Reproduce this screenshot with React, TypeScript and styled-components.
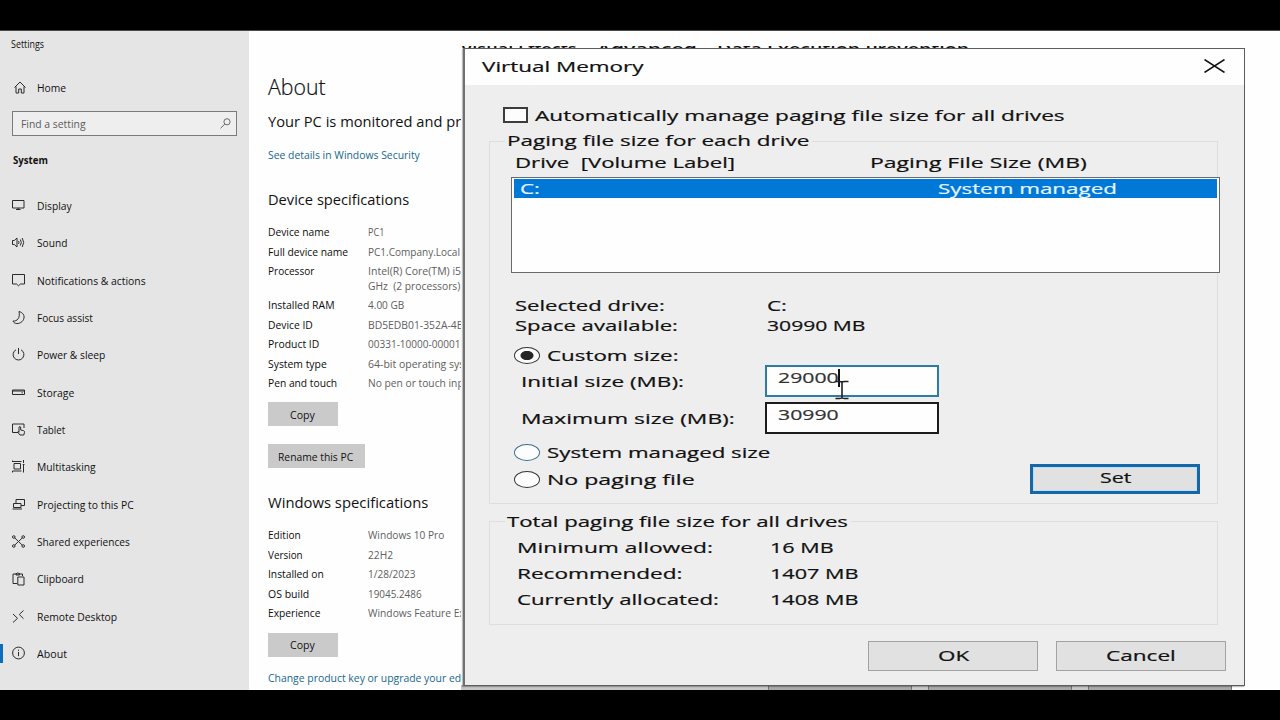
import React, { useLayoutEffect, useRef, useState } from 'react';
import styled, { createGlobalStyle } from 'styled-components';

const GlobalStyle = createGlobalStyle`
  * { box-sizing: border-box; }
  body { margin: 0; background: #000; overflow: hidden; }
`;

/* ---------- text fitted to a column width ---------- */

const FitBox = styled.span<{ $w: number }>`
  display: inline-block;
  flex: none;
  width: ${(p) => p.$w}px;
  text-align: left;
  white-space: pre;
`;

const FitInner = styled.span`
  display: inline-block;
  white-space: pre;
  transform-origin: 0 50%;
`;

function Fit({ w, children }: { w: number; children: string }) {
  const ref = useRef<HTMLSpanElement>(null);
  const [scale, setScale] = useState(1);
  useLayoutEffect(() => {
    if (ref.current) setScale(w / ref.current.offsetWidth);
  }, [w, children]);
  return (
    <FitBox $w={w}>
      <FitInner ref={ref} style={{ transform: `scaleX(${scale})` }}>
        {children}
      </FitInner>
    </FitBox>
  );
}

/* ---------- frame ---------- */

const Screen = styled.div`
  position: relative;
  width: 1280px;
  height: 720px;
  padding: 30px 0;
  background: #000;
  overflow: hidden;
  font-family: 'Open Sans', 'Noto Sans', sans-serif;
  font-size: 11px;
  color: #111;
`;

const Desktop = styled.div`
  position: relative;
  display: flex;
  height: 660px;
  background: #fefefe;
  border-top: 1px solid #4a4a4a;
  overflow: hidden;
`;

/* ---------- sidebar ---------- */

const Sidebar = styled.nav`
  display: flex;
  flex-direction: column;
  width: 249px;
  flex: none;
  background: #e5e5e5;
`;

const AppTitle = styled.div`
  height: 26px;
  line-height: 26px;
  padding-left: 11px;
  font-size: 10px;
`;

const HomeRow = styled.div`
  display: flex;
  align-items: center;
  height: 30px;
  margin-top: 15px;
  padding-left: 12.5px;
  gap: 9.5px;
`;

const SearchBox = styled.div`
  display: flex;
  align-items: center;
  justify-content: space-between;
  width: 225px;
  height: 25px;
  margin: 9px 0 0 12px;
  padding: 0 3px 1px 8px;
  border: 1.5px solid #7b7b7b;
  background: #eeeeee;
  color: #5c5c5c;
`;

const SectionTitle = styled.div`
  height: 24px;
  line-height: 24px;
  margin: 12px 0 14.8px;
  padding-left: 12.5px;
  font-weight: 700;
`;

const NavItem = styled.div<{ $active?: boolean }>`
  display: flex;
  align-items: center;
  height: 37.35px;
  padding-left: 11px;
  gap: 10.5px;
  background: linear-gradient(#0f6cbd, #0f6cbd) 0 50% / ${(p) => (p.$active ? '3px 19px' : '0 0')} no-repeat;
`;

const Glyph = styled.svg<{ $faint?: boolean }>`
  flex: none;
  width: 15px;
  height: 15px;
  fill: none;
  stroke: ${(p) => (p.$faint ? '#6a6a6a' : '#2a2a2a')};
  stroke-width: 1;
`;

const icons: Record<string, React.ReactNode> = {
  home: <path d="M1.500 7.500 7 2l5.500 5.500M3 6.500V13h2.700V9h2.600v4H11V6.500" />,
  search: <><circle cx="9" cy="5.800" r="3.100" /><path d="M6.800 8.100 2.500 12.300" /></>,
  display: <path d="M1.500 2.500h11.500v7.500H1.500zM5 11.500h4.500M7.200 10V11.500" />,
  sound: <path d="M1.500 5.500h1.800L6 3v9L3.300 9.500H1.500zM7.500 6q1 1.500 0 3M9.300 4.500q2 3 0 6M11.200 3q3 4.500 0 9" />,
  notify: <path d="M1.500 1.500H13.500v9.500H9.500L7.500 12.800 5.500 11h-4z" />,
  moon: <path d="M8 1.500c3.500 1 5.500 3.300 5 6.500-.7 4-5 6.300-8.500 5.300C3.300 13 2.300 12 2 11c4 .5 7.500-3 6-9.500z" />,
  power: <><path d="M7.500 1v6" /><path d="M5 2.800a5.400 5.400 0 1 0 5 0" /></>,
  storage: <><path d="M1.500 5h12v4.500h-12zM1.500 6h12" /><path d="M10.500 7.800h1.300" /></>,
  tablet: <><path d="M7 10.500H1.500V2h11.500v4" /><path d="M8 10.500V5q.9-1 1.700 0v3l3 .7q1 .4.800 1.600l-.7 2.700H9L6.500 10q.6-1 1.500 0" /></>,
  multi: <path d="M3 4.500h6.500v5.500H3zM1.500 1.500v1.500M1.500 12V13.500M1.500 2.500h9M1.500 12h9M12.500 1v3M12.500 6v7.500M11.700 5.500h1.800" />,
  project: <path d="M5 6.500V2.500h8.500v6H10M2.500 6.500H10v4H2.500zM1.500 12h9.500" />,
  shared: <><circle cx="2.800" cy="3" r="1.300" /><circle cx="12.200" cy="3" r="1.300" /><circle cx="2.800" cy="12" r="1.300" /><circle cx="12.200" cy="12" r="1.300" /><path d="M3.800 4 7.500 7.500 11.200 4M3.800 11l3.700-3.500 3.700 3.500" /></>,
  clip: <><path d="M6 12.500H2V3h9.500v2" /><path d="M5 4V2.500h1q.8-1.700 1.600 0h1V4zM6.800 6h6.200v8H6.800z" /></>,
  remote: <path d="m2 5 4.500 4.300L2 13.500M12.500 1.500 8.300 5.500l4.200 4.200" />,
  info: <><circle cx="7.500" cy="7" r="5.900" /><path d="M7.500 6v4.200M7.500 3.700v1.200" /></>,
};

const Icon = ({ name }: { name: string }) => (
  <Glyph viewBox="0 0 15 15" $faint={name === 'search'}>{icons[name]}</Glyph>
);

const navItems: [string, string, number][] = [
  ['display', 'Display', 34.5],
  ['sound', 'Sound', 30.5],
  ['notify', 'Notifications & actions', 108.5],
  ['moon', 'Focus assist', 56],
  ['power', 'Power & sleep', 68],
  ['storage', 'Storage', 37],
  ['tablet', 'Tablet', 28.5],
  ['multi', 'Multitasking', 59],
  ['project', 'Projecting to this PC', 97],
  ['shared', 'Shared experiences', 93],
  ['clip', 'Clipboard', 47],
  ['remote', 'Remote Desktop', 80],
  ['info', 'About', 30],
];

/* ---------- about page ---------- */

const About = styled.main`
  display: flex;
  flex-direction: column;
  align-items: flex-start;
  width: 212px;
  padding-left: 18.7px;
  overflow: hidden;
`;

const PageTitle = styled.h1`
  margin: 40px 0 0;
  height: 31px;
  line-height: 31px;
  font-size: 21.5px;
  font-weight: 300;
  -webkit-text-stroke: 0.2px #111;
`;

const Subtitle = styled.h2<{ $top: number }>`
  margin: ${(p) => p.$top}px 0 0;
  height: 22px;
  line-height: 22px;
  font-size: 15px;
  font-weight: 400;
`;

const Link = styled.a<{ $top: number }>`
  margin-top: ${(p) => p.$top}px;
  height: 18px;
  line-height: 18px;
  color: #17688f;
`;

const Specs = styled.dl<{ $top: number }>`
  margin: ${(p) => p.$top}px 0 0;
`;

const Spec = styled.div<{ $tall?: boolean }>`
  display: grid;
  grid-template-columns: 100.3px auto;
  height: ${(p) => (p.$tall ? 34 : 19.5)}px;
  line-height: ${(p) => (p.$tall ? 14.5 : 19.5)}px;
  padding-top: ${(p) => (p.$tall ? 3 : 0)}px;
`;

const Term = styled.dt`
  margin: 0;
  color: #0c0c0c;
`;

const Value = styled.dd`
  display: flex;
  flex-direction: column;
  margin: 0;
  color: #606060;
`;

const GreyButton = styled.button<{ $w: number; $top: number }>`
  display: flex;
  align-items: center;
  justify-content: center;
  flex: none;
  width: ${(p) => p.$w}px;
  height: 24px;
  margin-top: ${(p) => p.$top}px;
  padding: 0 1px 0 0;
  border: 0;
  background: #cacaca;
  font: inherit;
  color: #111;
`;

type SpecRow = [string, number, [string, number][]];

const deviceSpecs: SpecRow[] = [
  ['Device name', 61.5, [['PC1', 16.5]]],
  ['Full device name', 80.5, [['PC1.Company.Local', 92]]],
  ['Processor', 46.5, [['Intel(R) Core(TM) i5', 92.7], ['GHz  (2 processors)', 92.5]]],
  ['Installed RAM', 66.5, [['4.00 GB', 36.5]]],
  ['Device ID', 45, [['BD5EDB01-352A-4E', 94]]],
  ['Product ID', 51, [['00331-10000-00001', 92]]],
  ['System type', 58.5, [['64-bit operating sys', 96.5]]],
  ['Pen and touch', 69, [['No pen or touch inp', 96]]],
];

const windowsSpecs: SpecRow[] = [
  ['Edition', 33, [['Windows 10 Pro', 76.5]]],
  ['Version', 35, [['22H2', 25]]],
  ['Installed on', 56, [['1/28/2023', 47.5]]],
  ['OS build', 41, [['19045.2486', 54]]],
  ['Experience', 52, [['Windows Feature Ex', 97]]],
];

const SpecList = ({ rows, top }: { rows: SpecRow[]; top: number }) => (
  <Specs $top={top}>
    {rows.map(([label, w, values]) => (
      <Spec key={label} $tall={values.length > 1}>
        <Term><Fit w={w}>{label}</Fit></Term>
        <Value>{values.map(([v, vw]) => <Fit key={v} w={vw}>{v}</Fit>)}</Value>
      </Spec>
    ))}
  </Specs>
);

/* ---------- window behind the dialog ---------- */

const BackWindow = styled.div`
  position: absolute;
  left: 461px;
  top: 15px;
  width: 784px;
  height: 644px;
  display: flex;
  flex-direction: column;
  justify-content: space-between;
  overflow: hidden;
`;

const BackTabs = styled.div`
  display: flex;
  gap: 20px;
  height: 7px;
  line-height: 4px;
  font-size: 15px;
  font-weight: 600;
  color: #111;
  overflow: hidden;
`;

const BackFooter = styled.div`
  display: flex;
  justify-content: flex-end;
  gap: 16px;
  width: 771px;
  height: 5px;
  background: #c6c6c6;
`;

const BackButton = styled.div`
  width: 144px;
  height: 5px;
  border: 1px solid #777;
  border-bottom: 0;
  background: #a9a9a9;
`;

/* ---------- virtual memory dialog ---------- */

const Dialog = styled.section`
  position: absolute;
  left: 463px;
  top: 17px;
  width: 782px;
  height: 638px;
  display: flex;
  flex-direction: column;
  border: 1.5px solid #5c5c5c;
  border-left: 2px solid #707070;
  background: #eeeeee;
  box-shadow: -1px 1px 1px rgba(0, 0, 0, 0.25);
  font-size: 14.5px;
  color: #111;
  -webkit-text-stroke: 0.2px currentColor;
`;

const TitleBar = styled.header`
  display: flex;
  align-items: center;
  justify-content: space-between;
  height: 36px;
  flex: none;
  padding: 0 19px 2px 16.5px;
  background: #fefefe;
`;

const CloseGlyph = styled.svg`
  width: 21px;
  height: 14px;
  fill: none;
  stroke: #111;
  stroke-width: 1.5;
`;

const Body = styled.div`
  display: flex;
  flex-direction: column;
  padding-left: 24px;
`;

const CheckRow = styled.label`
  display: flex;
  align-items: center;
  gap: 7px;
  height: 22px;
  margin-top: 19px;
  padding-left: 14px;
`;

const CheckBox = styled.span`
  width: 25px;
  height: 16px;
  border: 2px solid #3c3c3c;
  background: #fdfdfd;
`;

const Group = styled.fieldset<{ $h: number; $top: number }>`
  width: 729px;
  min-width: 0;
  height: ${(p) => p.$h}px;
  margin: ${(p) => p.$top}px 0 0;
  padding: 0;
  border: 1px solid #dedede;
`;

const Legend = styled.legend`
  height: 20px;
  line-height: 20px;
  margin-left: 15px;
  padding: 0 3px 0 2px;
`;

const Line = styled.div<{ $h: number; $left: number; $col?: number; $top?: number }>`
  display: grid;
  grid-template-columns: ${(p) => p.$col ?? 0}px auto;
  align-items: center;
  justify-content: start;
  height: ${(p) => p.$h}px;
  margin-top: ${(p) => p.$top ?? 0}px;
  padding-left: ${(p) => p.$left}px;
`;

const DriveList = styled.div`
  width: 709px;
  height: 96px;
  margin: 4px 0 22px 21px;
  padding: 1px 2px;
  border: 1.5px solid #6a6a6a;
  background: #fefefe;
`;

const DriveRow = styled.div`
  display: grid;
  grid-template-columns: 418px auto;
  align-items: center;
  justify-content: start;
  height: 19px;
  padding-left: 6px;
  background: #0078d7;
  color: #e6f4ff;
`;

const RadioRow = styled.label<{ $h: number; $drop?: number }>`
  display: flex;
  align-items: center;
  gap: 7px;
  height: ${(p) => p.$h}px;
  padding: ${(p) => p.$drop ?? 0}px 0 0 24px;
`;

const Radio = styled.span<{ $on?: boolean; $color?: string }>`
  width: 26px;
  height: 17px;
  border: 1.5px solid ${(p) => p.$color ?? '#333'};
  border-radius: 50%;
  background: ${(p) => (p.$on ? 'radial-gradient(ellipse 7px 5px at center, #262626 85%, #fdfdfd 100%)' : '#fdfdfd')};
`;

const SizeInput = styled.div<{ $color: string }>`
  display: flex;
  align-items: center;
  width: 174px;
  height: 32px;
  padding: 0 0 7px 11px;
  border: 2px solid ${(p) => p.$color};
  background: #fefefe;
  color: #333;
`;

const Caret = styled.span`
  width: 1.5px;
  height: 18px;
  background: #111;
`;

const BeamCursor = styled.svg`
  position: absolute;
  left: 369px;
  top: 331px;
  width: 16px;
  height: 20px;
  fill: none;
  stroke: #222;
  stroke-width: 1.6;
`;

const Options = styled.div`
  display: flex;
  justify-content: space-between;
  padding-right: 17px;
`;

const PushButton = styled.button<{ $primary?: boolean }>`
  display: flex;
  align-items: center;
  justify-content: center;
  width: 170px;
  height: 30px;
  padding: 0 0 2px;
  border: ${(p) => (p.$primary ? '3px solid #1767a8' : '1.5px solid #a2a2a2')};
  background: #e1e1e1;
  font: inherit;
  color: #111;
  box-shadow: ${(p) => (p.$primary ? 'inset 0 0 0 1px #b5e3fb' : 'none')};
`;

const SetSlot = styled.div`
  padding-top: 29.5px;
`;

const Footer = styled.footer`
  display: flex;
  gap: 18px;
  margin: 16.5px 0 0 379px;
`;

export default function App() {
  return (
    <>
      <GlobalStyle />
      <Screen>
        <Desktop>
          <Sidebar>
            <AppTitle><Fit w={33}>Settings</Fit></AppTitle>
            <HomeRow><Icon name="home" /><Fit w={29}>Home</Fit></HomeRow>
            <SearchBox><Fit w={65}>Find a setting</Fit><Icon name="search" /></SearchBox>
            <SectionTitle><Fit w={35}>System</Fit></SectionTitle>
            {navItems.map(([icon, label, w]) => (
              <NavItem key={label} $active={label === 'About'}>
                <Icon name={icon} />
                <Fit w={w}>{label}</Fit>
              </NavItem>
            ))}
          </Sidebar>

          <About>
            <PageTitle><Fit w={57.5}>About</Fit></PageTitle>
            <Subtitle $top={8}><Fit w={193.5}>Your PC is monitored and pr</Fit></Subtitle>
            <Link $top={13.5}><Fit w={152}>See details in Windows Security</Fit></Link>
            <Subtitle $top={24.5}><Fit w={141.5}>Device specifications</Fit></Subtitle>
            <SpecList rows={deviceSpecs} top={12} />
            <GreyButton $w={70} $top={9.8}><Fit w={25}>Copy</Fit></GreyButton>
            <GreyButton $w={97} $top={18}><Fit w={75}>Rename this PC</Fit></GreyButton>
            <Subtitle $top={23}><Fit w={160}>Windows specifications</Fit></Subtitle>
            <SpecList rows={windowsSpecs} top={12} />
            <GreyButton $w={70} $top={10}><Fit w={25}>Copy</Fit></GreyButton>
            <Link $top={12.5}><Fit w={193}>Change product key or upgrade your ed</Fit></Link>
          </About>

          <BackWindow>
            <BackTabs>
              <Fit w={116}>Visual Effects</Fit>
              <Fit w={100}>Advanced</Fit>
              <Fit w={253}>Data Execution Prevention</Fit>
            </BackTabs>
            <BackFooter><BackButton /><BackButton /><BackButton /></BackFooter>
          </BackWindow>

          <Dialog>
            <TitleBar>
              <Fit w={161}>Virtual Memory</Fit>
              <CloseGlyph viewBox="0 0 21 14"><path d="M.5 .5l20 13M20.500 .5l-20 13" /></CloseGlyph>
            </TitleBar>
            <Body>
              <CheckRow><CheckBox /><Fit w={529}>Automatically manage paging file size for all drives</Fit></CheckRow>
              <Group $h={373} $top={5}>
                <Legend><Fit w={302}>Paging file size for each drive</Fit></Legend>
                <Line $h={22} $left={25} $col={355}>
                  <Fit w={220}>{'Drive  [Volume Label]'}</Fit><Fit w={217}>Paging File Size (MB)</Fit>
                </Line>
                <DriveList>
                  <DriveRow><Fit w={20}>C:</Fit><Fit w={179}>System managed</Fit></DriveRow>
                </DriveList>
                <Line $h={20} $left={25} $col={252}><Fit w={149}>Selected drive:</Fit><Fit w={20}>C:</Fit></Line>
                <Line $h={20} $left={25} $col={252}><Fit w={163}>Space available:</Fit><Fit w={99}>30990 MB</Fit></Line>
                <RadioRow $h={30} $drop={11}><Radio $on /><Fit w={131}>Custom size:</Fit></RadioRow>
                <Line $h={32} $left={31} $col={244}>
                  <Fit w={163}>Initial size (MB):</Fit>
                  <SizeInput $color="#2b7da6"><Fit w={60}>29000</Fit><Caret /></SizeInput>
                </Line>
                <Line $h={32} $left={31} $col={244} $top={5}>
                  <Fit w={214}>Maximum size (MB):</Fit>
                  <SizeInput $color="#1c1c1c"><Fit w={60}>30990</Fit></SizeInput>
                </Line>
                <Options>
                  <div>
                    <RadioRow $h={36}><Radio $color="#3a6d92" /><Fit w={223}>System managed size</Fit></RadioRow>
                    <RadioRow $h={18}><Radio /><Fit w={148}>No paging file</Fit></RadioRow>
                  </div>
                  <SetSlot><PushButton $primary><Fit w={31}>Set</Fit></PushButton></SetSlot>
                </Options>
              </Group>
              <Group $h={113} $top={7.500}>
                <Legend><Fit w={341}>Total paging file size for all drives</Fit></Legend>
                <Line $h={26} $left={27} $col={253} $top={3}><Fit w={196}>Minimum allowed:</Fit><Fit w={64}>16 MB</Fit></Line>
                <Line $h={26} $left={27} $col={253}><Fit w={165}>Recommended:</Fit><Fit w={88}>1407 MB</Fit></Line>
                <Line $h={26} $left={27} $col={253}><Fit w={202}>Currently allocated:</Fit><Fit w={88}>1408 MB</Fit></Line>
              </Group>
              <Footer>
                <PushButton><Fit w={31}>OK</Fit></PushButton>
                <PushButton><Fit w={70}>Cancel</Fit></PushButton>
              </Footer>
            </Body>
            <BeamCursor viewBox="0 0 16 20"><path d="M1.500 1.500h4q2 0 2.500 1 .5-1 2.500-1h4M8 2v16M1.500 18.500h4q2 0 2.500-1 .5 1 2.500 1h4" /></BeamCursor>
          </Dialog>
        </Desktop>
      </Screen>
    </>
  );
}
